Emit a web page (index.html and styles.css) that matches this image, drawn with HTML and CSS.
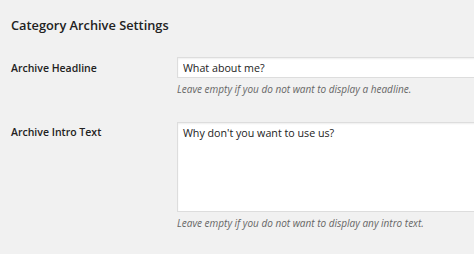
FILE: index.html
```html
<!DOCTYPE html>
<html lang="en">
<head>
    <meta charset="UTF-8">
    <meta name="viewport" content="width=device-width, initial-scale=1.0">
    <title>Category Archive Settings</title>
    <link rel="stylesheet" href="styles.css">
</head>
<body>
    <div class="wrap">
        <h3 class="section-title">Category Archive Settings</h3>

        <div class="form-table">
            <div class="form-row">
                <label class="field-label" for="archiveHeadline">Archive Headline</label>
                <div class="field">
                    <input type="text" class="text-input" id="archiveHeadline" value="What about me?">
                    <p class="description">Leave empty if you do not want to display a headline.</p>
                </div>
            </div>

            <div class="form-row">
                <label class="field-label" for="archiveIntro">Archive Intro Text</label>
                <div class="field">
                    <textarea class="text-area" id="archiveIntro">Why don't you want to use us?</textarea>
                    <p class="description">Leave empty if you do not want to display any intro text.</p>
                </div>
            </div>
        </div>
    </div>
</body>
</html>
```

FILE: styles.css
```css
* {
    margin: 0;
    padding: 0;
    box-sizing: border-box;
}

html, body {
    height: 100%;
}

body {
    font-family: 'Open Sans', 'Noto Sans', sans-serif;
    background: #f1f1f1;
    color: #222;
    overflow: hidden;
}

.wrap {
    padding: 14px 0 0 11px;
}

.section-title {
    font-size: 12.8px;
    font-weight: 600;
    color: #222;
    line-height: 22px;
    margin-bottom: 21px;
}

.form-row {
    display: grid;
    grid-template-columns: 166px 1fr;
    margin-bottom: 25px;
}

.field-label {
    font-size: 10.5px;
    font-weight: 600;
    color: #222;
    line-height: 20px;
    padding-top: 1px;
}

.form-row:nth-child(2) .field-label {
    padding-top: 0;
}

.field {
    margin-right: -10px;
}

.text-input,
.text-area {
    display: block;
    width: 100%;
    font-family: 'Open Sans', 'Noto Sans', sans-serif;
    font-size: 10.7px;
    color: #222;
    background: #fff;
    border: 1px solid #ddd;
    box-shadow: inset 0 1px 2px rgba(0, 0, 0, 0.07);
    outline: none;
}

.text-input {
    height: 21px;
    padding: 0 5px;
    line-height: 19px;
}

.text-area {
    height: 90px;
    padding: 3px 5px;
    line-height: 14px;
    resize: none;
}

.description {
    font-size: 10px;
    font-style: italic;
    color: #666;
    line-height: 16px;
    margin-top: 3px;
}
```
